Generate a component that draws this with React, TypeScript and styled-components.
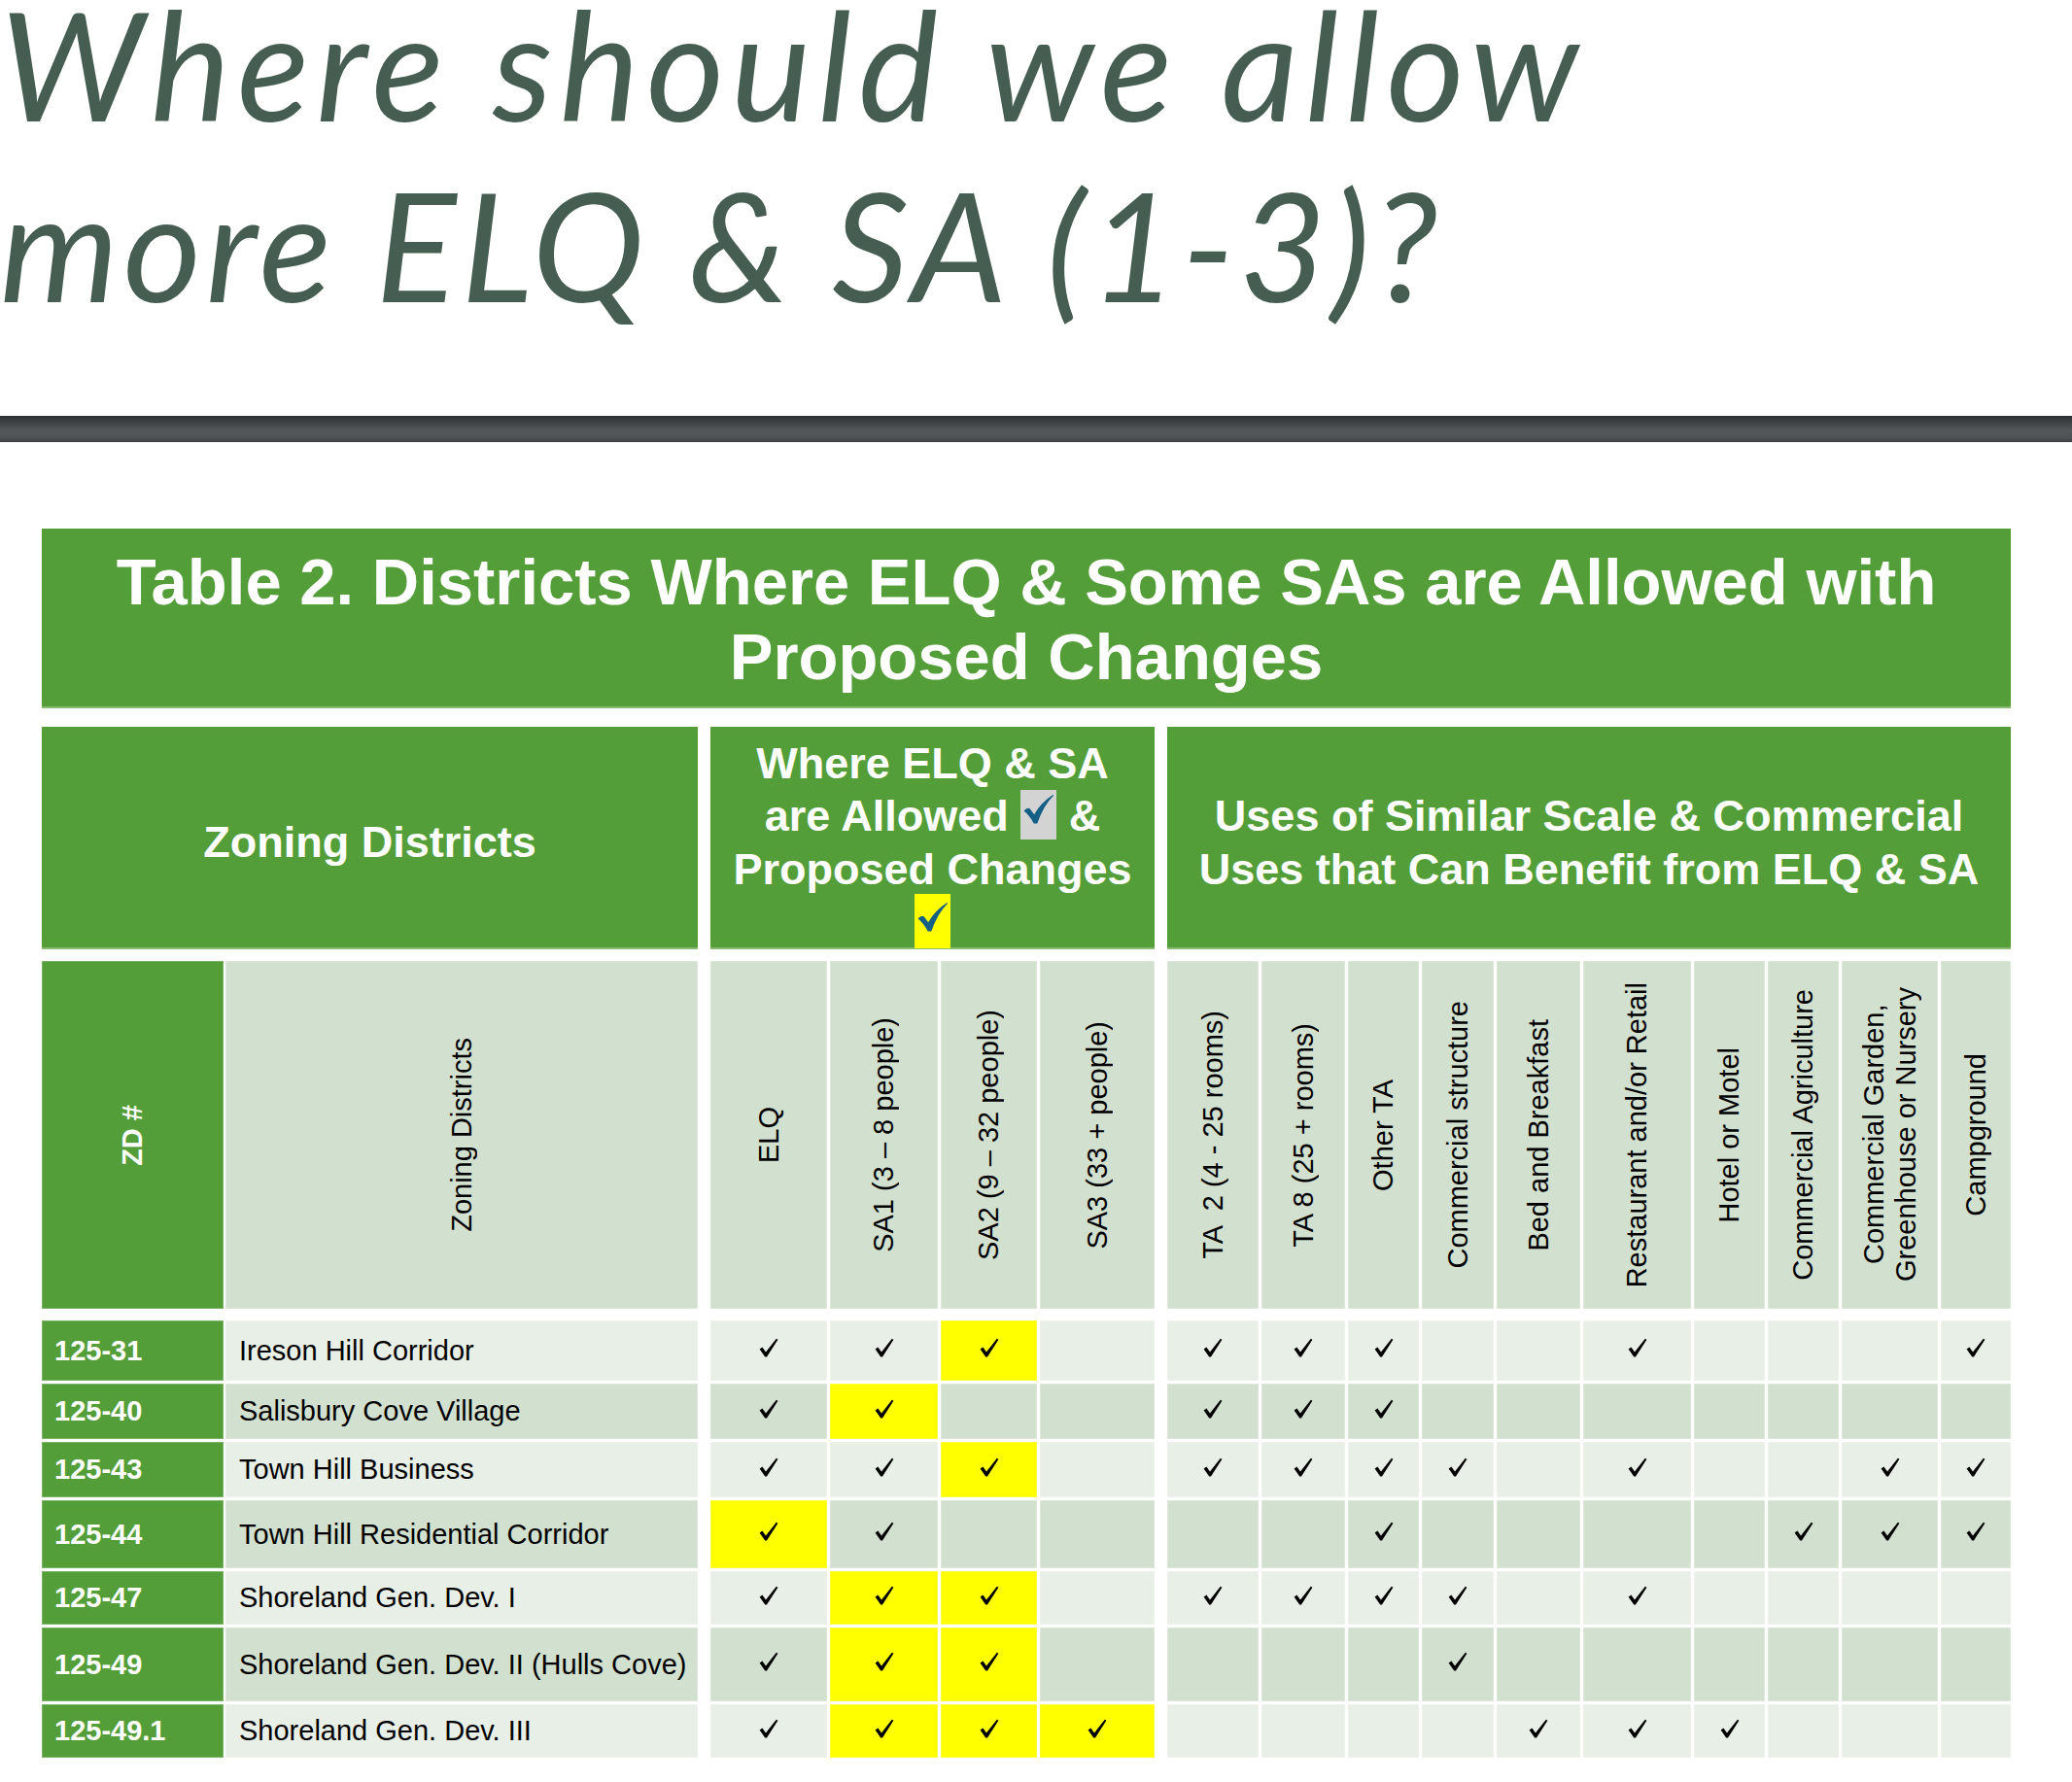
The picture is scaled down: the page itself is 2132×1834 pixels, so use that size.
import React from "react";
import styled, { createGlobalStyle } from "styled-components";

const Global = createGlobalStyle`
  html, body { margin: 0; padding: 0; background: #ffffff; }
  body { font-family: "Liberation Sans", Arial, sans-serif; }
`;

const GREEN = "#549e39";
const LIGHT = "#e8efe6";
const DARK = "#d2e0cf";
const YELLOW = "#ffff00";
const SANS = `"Liberation Sans", Arial, sans-serif`;

const Page = styled.div`
  width: 2132px;
  height: 1834px;
  background: #ffffff;
  overflow: hidden;
`;

const Heading = styled.h1`
  margin: 0;
  font-family: Lato, "Open Sans", sans-serif;
  font-style: italic;
  font-weight: 400;
  font-size: 155px;
  color: #465e51;
  white-space: nowrap;
`;

const HeadLine = styled.span<{ $lh: number; $mt: number; $ls: number }>`
  display: block;
  line-height: ${(p) => p.$lh}px;
  margin-top: ${(p) => p.$mt}px;
  letter-spacing: ${(p) => p.$ls}px;
`;

const Bar = styled.div`
  margin-top: 84px;
  height: 27px;
  background: linear-gradient(
    to bottom,
    #2c2e30 0%,
    #3f4245 25%,
    #53575a 55%,
    #4e5255 85%,
    #3a3c3f 100%
  );
`;

const Table = styled.div`
  margin: 89px 0 0 43px;
  width: 2026px;
  display: flex;
  flex-direction: column;
  font-family: ${SANS};
`;

const TitleBox = styled.div`
  height: 185px;
  background: ${GREEN};
  box-shadow: inset 0 -2px 0 #86bd72;
  display: flex;
  align-items: center;
  justify-content: center;
  text-align: center;
  color: #ffffff;
  font-family: ${SANS};
  font-weight: 700;
  font-size: 67px;
  line-height: 77px;
`;

const Row = styled.div<{ $h: number; $mt: number }>`
  display: flex;
  gap: 13px;
  height: ${(p) => p.$h}px;
  margin-top: ${(p) => p.$mt}px;
`;

const GroupHead = styled.div<{ $w: number }>`
  width: ${(p) => p.$w}px;
  box-sizing: border-box;
  padding-top: 10px;
  background: ${GREEN};
  box-shadow: inset 0 -2px 0 #86bd72;
  display: flex;
  flex-direction: column;
  align-items: center;
  justify-content: center;
  text-align: center;
  color: #ffffff;
  font-family: ${SANS};
  font-weight: 700;
  font-size: 45px;
  line-height: 54.5px;
`;

const Segment = styled.div<{ $gap: number }>`
  display: flex;
  gap: ${(p) => p.$gap}px;
  height: 100%;
`;

const Cell = styled.div<{ $w: number; $bg: string }>`
  width: ${(p) => p.$w}px;
  flex: none;
  background: ${(p) => p.$bg};
  box-shadow: inset 0 0 0 1px rgba(255, 255, 255, 0.22);
  display: flex;
  align-items: center;
  justify-content: center;
  font-family: ${SANS};
`;

const ZdCell = styled(Cell)`
  justify-content: flex-start;
  padding-left: 13px;
  box-sizing: border-box;
  color: #ffffff;
  font-weight: 700;
  font-size: 29px;
`;

const NameCell = styled(Cell)`
  justify-content: flex-start;
  padding-left: 14px;
  box-sizing: border-box;
  color: #000000;
  font-size: 29px;
`;

const VLabel = styled.span<{ $bold?: boolean; $light?: boolean }>`
  writing-mode: vertical-rl;
  transform: rotate(180deg);
  white-space: pre;
  text-align: center;
  font-family: ${SANS};
  font-size: 29px;
  line-height: 33px;
  font-weight: ${(p) => (p.$bold ? 700 : 400)};
  color: ${(p) => (p.$light ? "#ffffff" : "#000000")};
`;

const InlineBox = styled.span<{ $bg: string; $h: number; $pt: number }>`
  display: inline-block;
  width: 37px;
  height: ${(p) => p.$h}px;
  background: ${(p) => p.$bg};
  vertical-align: -9px;
  padding-top: ${(p) => p.$pt}px;
  box-sizing: border-box;
  text-align: center;
`;

const BlockBox = styled(InlineBox)`
  display: block;
  margin-top: -2px;
`;

const MarkIcon = styled.svg`
  width: 20px;
  height: 20px;
  margin-bottom: 6px;
`;

const HeadCheck = styled.svg`
  display: block;
  margin: 0 auto;
  width: 33px;
  height: 32px;
`;

const Check = () => (
  <MarkIcon viewBox="0 0 20 20">
    <path
      d="M0.6 11.4 L3.4 9.6 L7 14.4 L17.8 0.8 L19.4 1.8 L8 19.4 L6.2 19.4 Z"
      fill="#000000"
    />
  </MarkIcon>
);

const BlueCheck = () => (
  <HeadCheck viewBox="0 0 32 32">
    <path
      d="M1 17.5 Q4 13.8 7.2 15.2 L11.6 21.2 Q18.5 9 31 1 L31.6 1.8 Q21.5 11.5 14.8 30.5 L11.2 30.5 Q7.2 22.5 1 17.5 Z"
      fill="#135f85"
    />
  </HeadCheck>
);

type Mark = "" | "c" | "y";

const leftCols = [187, 486];
const midCols = [120, 111, 99, 118];
const rightCols = [94, 86, 73, 74, 86, 111, 73, 73, 99, 72];

const midLabels = [
  "ELQ",
  "SA1 (3 – 8 people)",
  "SA2 (9 – 32 people)",
  "SA3 (33 + people)",
];
const rightLabels = [
  "TA  2 (4 - 25 rooms)",
  "TA 8 (25 + rooms)",
  "Other TA",
  "Commercial structure",
  "Bed and Breakfast",
  "Restaurant and/or Retail",
  "Hotel or Motel",
  "Commercial Agriculture",
  "Commercial Garden,\nGreenhouse or Nursery",
  "Campground",
];

type DataRow = {
  zd: string;
  name: string;
  h: number;
  dark: boolean;
  mid: Mark[];
  right: Mark[];
};

const rows: DataRow[] = [
  {
    zd: "125-31",
    name: "Ireson Hill Corridor",
    h: 62,
    dark: false,
    mid: ["c", "c", "y", ""],
    right: ["c", "c", "c", "", "", "c", "", "", "", "c"],
  },
  {
    zd: "125-40",
    name: "Salisbury Cove Village",
    h: 57,
    dark: true,
    mid: ["c", "y", "", ""],
    right: ["c", "c", "c", "", "", "", "", "", "", ""],
  },
  {
    zd: "125-43",
    name: "Town Hill Business",
    h: 57,
    dark: false,
    mid: ["c", "c", "y", ""],
    right: ["c", "c", "c", "c", "", "c", "", "", "c", "c"],
  },
  {
    zd: "125-44",
    name: "Town Hill Residential Corridor",
    h: 70,
    dark: true,
    mid: ["y", "c", "", ""],
    right: ["", "", "c", "", "", "", "", "c", "c", "c"],
  },
  {
    zd: "125-47",
    name: "Shoreland Gen. Dev. I",
    h: 55,
    dark: false,
    mid: ["c", "y", "y", ""],
    right: ["c", "c", "c", "c", "", "c", "", "", "", ""],
  },
  {
    zd: "125-49",
    name: "Shoreland Gen. Dev. II (Hulls Cove)",
    h: 76,
    dark: true,
    mid: ["c", "y", "y", ""],
    right: ["", "", "", "c", "", "", "", "", "", ""],
  },
  {
    zd: "125-49.1",
    name: "Shoreland Gen. Dev. III",
    h: 55,
    dark: false,
    mid: ["c", "y", "y", "y"],
    right: ["", "", "", "", "c", "c", "c", "", "", ""],
  },
];

const MarkCells = ({ cols, marks, base }: { cols: number[]; marks: Mark[]; base: string }) => (
  <Segment $gap={3}>
    {cols.map((w, i) => (
      <Cell key={i} $w={w} $bg={marks[i] === "y" ? YELLOW : base}>
        {marks[i] ? <Check /> : null}
      </Cell>
    ))}
  </Segment>
);

export default function App() {
  return (
    <Page>
      <Global />
      <Heading>
        <HeadLine $lh={130} $mt={0} $ls={7}>
          Where should we allow
        </HeadLine>
        <HeadLine $lh={186} $mt={28} $ls={4.7}>
          more ELQ &amp; SA (1-3)?
        </HeadLine>
      </Heading>
      <Bar />
      <Table>
        <TitleBox>
          Table 2. Districts Where ELQ &amp; Some SAs are Allowed with
          <br />
          Proposed Changes
        </TitleBox>

        <Row $h={229} $mt={19}>
          <GroupHead $w={675}>Zoning Districts</GroupHead>
          <GroupHead $w={457}>
            <div>
              Where ELQ &amp; SA
              <br />
              are Allowed{" "}
              <InlineBox $bg="#d3d3d3" $h={51} $pt={4}>
                <BlueCheck />
              </InlineBox>{" "}
              &amp;
              <br />
              Proposed Changes
            </div>
            <BlockBox $bg={YELLOW} $h={56} $pt={8}>
              <BlueCheck />
            </BlockBox>
          </GroupHead>
          <GroupHead $w={868}>
            Uses of Similar Scale &amp; Commercial
            <br />
            Uses that Can Benefit from ELQ &amp; SA
          </GroupHead>
        </Row>

        <Row $h={358} $mt={12}>
          <Segment $gap={2}>
            <Cell $w={leftCols[0]} $bg={GREEN}>
              <VLabel $bold $light>
                ZD #
              </VLabel>
            </Cell>
            <Cell $w={leftCols[1]} $bg={DARK}>
              <VLabel>Zoning Districts</VLabel>
            </Cell>
          </Segment>
          <Segment $gap={3}>
            {midCols.map((w, i) => (
              <Cell key={i} $w={w} $bg={DARK}>
                <VLabel>{midLabels[i]}</VLabel>
              </Cell>
            ))}
          </Segment>
          <Segment $gap={3}>
            {rightCols.map((w, i) => (
              <Cell key={i} $w={w} $bg={DARK}>
                <VLabel>{rightLabels[i]}</VLabel>
              </Cell>
            ))}
          </Segment>
        </Row>

        {rows.map((r, idx) => {
          const base = r.dark ? DARK : LIGHT;
          return (
            <Row key={r.zd} $h={r.h} $mt={idx === 0 ? 12 : 3}>
              <Segment $gap={2}>
                <ZdCell $w={leftCols[0]} $bg={GREEN}>
                  {r.zd}
                </ZdCell>
                <NameCell $w={leftCols[1]} $bg={base}>
                  {r.name}
                </NameCell>
              </Segment>
              <MarkCells cols={midCols} marks={r.mid} base={base} />
              <MarkCells cols={rightCols} marks={r.right} base={base} />
            </Row>
          );
        })}
      </Table>
    </Page>
  );
}
